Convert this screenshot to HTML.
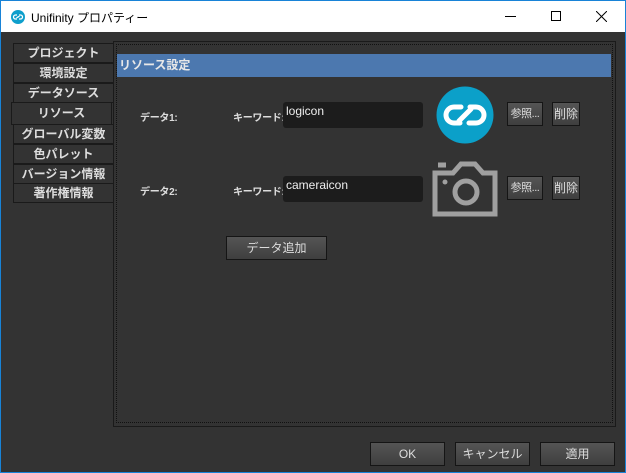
<!DOCTYPE html>
<html><head><meta charset="utf-8"><style>
*{margin:0;padding:0;box-sizing:border-box}
body{width:626px;height:473px;overflow:hidden;font-family:"Liberation Sans","Noto Sans CJK JP",sans-serif;background:#333}
.win{position:absolute;left:0;top:0;width:626px;height:473px;border:1px solid #1883d7;background:#333}
.title{position:absolute;left:-1px;top:-1px;width:626px;height:32px;background:#fff;color:#000;font-size:12px;border:1px solid #1883d7;border-bottom:none}
.a{position:absolute;white-space:nowrap}
.tab{position:absolute;left:12px;width:101px;height:20px;background:#333;border:1px solid #1a1a1a;color:#ddd;font-size:12px;text-align:center;line-height:18px;font-weight:bold;white-space:nowrap}
.lbl{position:absolute;color:#ddd;font-size:10px;font-weight:bold;white-space:nowrap;letter-spacing:-0.3px}
.inp{position:absolute;left:282px;width:140px;height:26px;background:#1c1c1c;border-radius:3px;color:#eee;font-size:12px;padding:2px 3px}
.sb{position:absolute;height:24px;background:linear-gradient(#555,#3f3f3f);border:1px solid #151515;color:#ddd;font-size:12px;text-align:center;line-height:22px;white-space:nowrap;overflow:hidden}
</style></head><body><div class="win">
<div class="title">
<svg class="a" style="left:10px;top:9px" width="14" height="14" viewBox="0 0 14 14"><circle cx="7" cy="7" r="7" fill="#0e9fcc"/><path d="M6 5H4.5a2 2 0 0 0 0 4H6M8 9h1.5a2 2 0 0 0 0 -4H8M5.5 7.8L8.5 6.2" stroke="#fff" stroke-width="1.3" fill="none"/></svg>
<div class="a" style="left:30px;top:8px">Unifinity プロパティー</div>
<div class="a" style="left:504px;top:15px;width:11px;height:1px;background:#000"></div>
<div class="a" style="left:550px;top:10px;width:10px;height:10px;border:1px solid #000"></div>
<svg class="a" style="left:595px;top:10px" width="11" height="11"><path d="M0 0L11 11M11 0L0 11" stroke="#000" stroke-width="1"/></svg>
</div>
<div class="tab" style="top:42px">プロジェクト</div>
<div class="tab" style="top:62px">環境設定</div>
<div class="tab" style="top:82px">データソース</div>
<div class="tab" style="top:101px;left:10px;height:23px;line-height:21px;z-index:2">リソース</div>
<div class="tab" style="top:123px">グローバル変数</div>
<div class="tab" style="top:143px">色パレット</div>
<div class="tab" style="top:163px">バージョン情報</div>
<div class="tab" style="top:182px">著作権情報</div>
<div class="a" style="left:112px;top:40px;width:503px;height:386px;border:1px solid #1a1a1a"></div>
<div class="a" style="left:115px;top:43px;width:497px;height:379px;border:1px dotted #111"></div>
<div class="a" style="left:116px;top:53px;width:494px;height:23px;background:#4c78af;color:#e8e8e8;font-size:12px;line-height:23px;padding-left:2px;font-weight:bold">リソース設定</div>
<div class="lbl" style="left:139px;top:108px">データ1:</div>
<div class="lbl" style="left:232px;top:108px">キーワード:</div>
<div class="inp" style="top:101px">logicon</div>
<div class="lbl" style="left:139px;top:182px">データ2:</div>
<div class="lbl" style="left:232px;top:182px">キーワード:</div>
<div class="inp" style="top:175px">cameraicon</div>
<svg class="a" style="left:435px;top:85px" width="58" height="58" viewBox="0 0 58 58"><circle cx="29" cy="29" r="28.5" fill="#0ba0c9"/><path d="M25 21H18a8 8 0 0 0 0 16h6M33 37h7a8 8 0 0 0 0 -16h-6M23 35L35 23" stroke="#fff" stroke-width="5" fill="none" stroke-linecap="round"/></svg>
<svg class="a" style="left:431px;top:160px" width="66" height="56" viewBox="0 0 66 56"><path d="M6 4h8M3 12h18l8 -9h14l8 9h12v41H3z" stroke="#a0a0a0" stroke-width="5" fill="none"/><circle cx="34" cy="31" r="11" stroke="#a0a0a0" stroke-width="5" fill="none"/><circle cx="13" cy="21" r="2.5" fill="#a0a0a0"/></svg>
<div class="sb" style="left:506px;top:101px;width:36px;font-size:11px;letter-spacing:-0.5px">参照...</div>
<div class="sb" style="left:551px;top:101px;width:28px">削除</div>
<div class="sb" style="left:506px;top:175px;width:36px;font-size:11px;letter-spacing:-0.5px">参照...</div>
<div class="sb" style="left:551px;top:175px;width:28px">削除</div>
<div class="sb" style="left:225px;top:235px;width:101px">データ追加</div>
<div class="sb" style="left:369px;top:441px;width:75px">OK</div>
<div class="sb" style="left:454px;top:441px;width:75px">キャンセル</div>
<div class="sb" style="left:539px;top:441px;width:75px">適用</div>
</div></body></html>
